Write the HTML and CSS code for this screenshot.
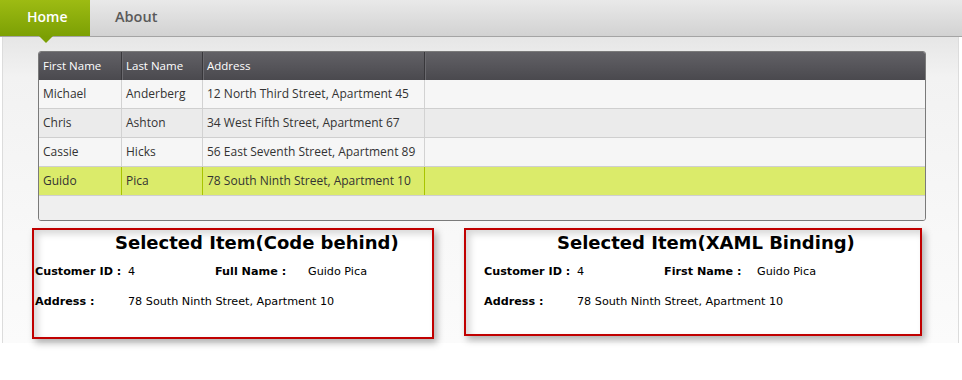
FILE: index.html
```html
<!DOCTYPE html>
<html>
<head>
<meta charset="utf-8">
<link rel="stylesheet" href="styles.css">
</head>
<body>
<div class="nav">
  <div class="tab tab-active">Home</div>
  <div class="tab">About</div>
</div>
<div class="main">
  <div class="grid">
    <div class="row head">
      <div class="cell c1">First Name</div>
      <div class="cell c2">Last Name</div>
      <div class="cell c3">Address</div>
      <div class="cell c4"></div>
    </div>
    <div class="row odd">
      <div class="cell c1">Michael</div>
      <div class="cell c2">Anderberg</div>
      <div class="cell c3">12 North Third Street, Apartment 45</div>
      <div class="cell c4"></div>
    </div>
    <div class="row even">
      <div class="cell c1">Chris</div>
      <div class="cell c2">Ashton</div>
      <div class="cell c3">34 West Fifth Street, Apartment 67</div>
      <div class="cell c4"></div>
    </div>
    <div class="row odd">
      <div class="cell c1">Cassie</div>
      <div class="cell c2">Hicks</div>
      <div class="cell c3">56 East Seventh Street, Apartment 89</div>
      <div class="cell c4"></div>
    </div>
    <div class="row sel">
      <div class="cell c1">Guido</div>
      <div class="cell c2">Pica</div>
      <div class="cell c3">78 South Ninth Street, Apartment 10</div>
      <div class="cell c4"></div>
    </div>
    <div class="filler"></div>
  </div>
  <div class="panels">
    <div class="panel panel-left">
      <div class="ptitle">Selected Item(Code behind)</div>
      <div class="prow">
        <span class="lbl w93">Customer ID :</span>
        <span class="val w87">4</span>
        <span class="lbl w93">Full Name :</span>
        <span class="val">Guido Pica</span>
      </div>
      <div class="prow">
        <span class="lbl w93">Address :</span>
        <span class="val">78 South Ninth Street, Apartment 10</span>
      </div>
    </div>
    <div class="panel panel-right">
      <div class="ptitle">Selected Item(XAML Binding)</div>
      <div class="prow">
        <span class="lbl w93">Customer ID :</span>
        <span class="val w87">4</span>
        <span class="lbl w93">First Name :</span>
        <span class="val">Guido Pica</span>
      </div>
      <div class="prow">
        <span class="lbl w93">Address :</span>
        <span class="val">78 South Ninth Street, Apartment 10</span>
      </div>
    </div>
  </div>
</div>
</body>
</html>
```
FILE: styles.css
```css
html, body {
  margin: 0;
  padding: 0;
  background: #ffffff;
}
body {
  font-family: "Open Sans", "DejaVu Sans", sans-serif;
  width: 962px;
  height: 380px;
  overflow: hidden;
}
.nav {
  height: 36px;
  display: flex;
  background: linear-gradient(#e9e9e9, #d2d2d2);
  border-bottom: 1px solid #a4a4a4;
}
.tab {
  width: 90px;
  height: 36px;
  box-sizing: border-box;
  padding-left: 25px;
  line-height: 34px;
  font-family: "Open Sans", sans-serif;
  font-weight: 600;
  font-size: 14.5px;
  color: #5a5a5a;
  position: relative;
}
.tab-active {
  background: linear-gradient(#9dbb13, #7ca004);
  color: #ffffff;
  padding-left: 27px;
  font-size: 14px;
}
.tab-active::after {
  content: "";
  position: absolute;
  left: 39px;
  top: 36px;
  border-left: 7px solid transparent;
  border-right: 7px solid transparent;
  border-top: 7px solid #7b9f04;
  z-index: 2;
}
.main {
  margin: 0 3px 0 2px;
  height: 306px;
  border-left: 1px solid #dcdcdc;
  border-right: 1px solid #dcdcdc;
  background: linear-gradient(#e6e6e6 0px, #f2f2f2 40px, #f8f8f8 200px, #fbfbfb 306px);
  padding-top: 14px;
  box-sizing: border-box;
}
.grid {
  margin-left: 35px;
  width: 888px;
  box-sizing: border-box;
  border: 1px solid #7a7a7a;
  border-radius: 3px;
  overflow: hidden;
  background: #efefef;
}
.row {
  display: flex;
  height: 29px;
  box-sizing: border-box;
  border-bottom: 1px solid #cfcfcf;
  font-size: 12px;
  color: #333333;
}
.cell {
  box-sizing: border-box;
  padding-left: 4px;
  line-height: 28px;
  border-right: 1px solid #d2d2d2;
  white-space: nowrap;
}
.c1 { width: 83px; }
.c2 { width: 81px; }
.c3 { width: 222px; }
.c4 { flex: 1; border-right: none; }
.head {
  height: 28px;
  background: linear-gradient(#626166, #4a494e);
  color: #ffffff;
  border-bottom: none;
  font-size: 11.5px;
}
.head .cell {
  border-right: 1px solid #38373b;
  box-shadow: 1px 0 0 #6a696e;
  line-height: 28px;
}
.head .c4 { border-right: none; box-shadow: none; }
.odd { background: #f6f6f6; }
.even { background: #ebebeb; }
.sel { background: #dbeb6a; }
.sel .cell { border-right-color: #a8c400; }
.sel .c4 { border-right: none; }
.filler {
  height: 24px;
  background: #efefef;
}
.panels {
  display: flex;
  align-items: flex-start;
  margin-top: 7px;
}
.panel {
  box-sizing: border-box;
  border: 2px solid #c00000;
  background: #ffffff;
  box-shadow: 3px 4px 7px rgba(0, 0, 0, 0.3), inset 4px 4px 7px rgba(0, 0, 0, 0.16);
  font-family: "DejaVu Sans", Verdana, sans-serif;
  color: #000000;
}
.panel-left {
  margin-left: 29px;
  width: 402px;
  height: 111px;
  padding-left: 1px;
}
.panel-right {
  margin-left: 30px;
  width: 458px;
  height: 108px;
  padding-left: 18px;
}
.ptitle {
  font-weight: bold;
  font-size: 18px;
  height: 27px;
  line-height: 26px;
}
.panel-left .ptitle { padding-left: 80px; }
.panel-right .ptitle { padding-left: 73px; }
.prow {
  display: flex;
  height: 30px;
  line-height: 30px;
  font-size: 11.2px;
}
.lbl { font-weight: bold; }
.w93 { width: 93px; flex: none; }
.w87 { width: 87px; flex: none; }
```
